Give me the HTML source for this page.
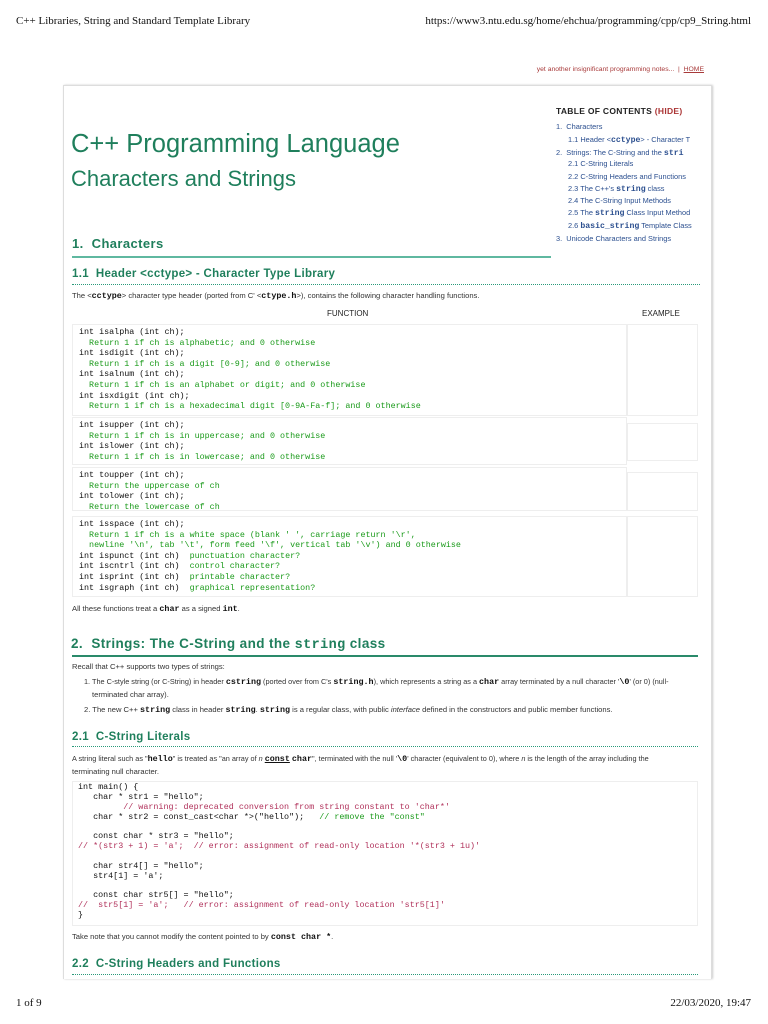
<!DOCTYPE html>
<html><head><meta charset="utf-8"><style>
*{margin:0;padding:0;box-sizing:border-box}
body{width:768px;height:1024px;background:#fff;position:relative;overflow:hidden;font-family:"Liberation Sans",sans-serif;color:#222}
.a{position:absolute;white-space:nowrap}
.ser{font-family:"Liberation Serif",serif;font-size:11px;color:#111}
.g{color:#1f7f5c}
.m{font-family:"Liberation Mono",monospace}
.code{font-family:"Liberation Mono",monospace;font-size:8.4px;color:#111;line-height:10.6px;white-space:pre}
.c{color:#1a9a1a}
.r{color:#b0305a}
.p{font-size:7.6px;color:#333}
.p b{font-family:"Liberation Mono",monospace;font-size:8.4px;color:#111}
.toc{font-size:7.4px;color:#2b4f8f}
.toc b{font-family:"Liberation Mono",monospace;font-size:8.2px}
.h2{font-weight:bold;font-size:11.5px;letter-spacing:.3px}
.dot{position:absolute;height:0;border-top:1px dotted #2a9a7a}
.cell{position:absolute;border:1px solid #eee}
</style></head><body>
<div class="a ser" style="left:16px;top:15px">C++ Libraries, String and Standard Template Library</div>
<div class="a ser" style="right:17px;top:15px">https://www3.ntu.edu.sg/home/ehchua/programming/cpp/cp9_String.html</div>
<div class="a" style="right:64px;top:66px;font-size:6.8px;color:#a83a3a">yet another insignificant programming notes... &nbsp;| &nbsp;<u>HOME</u></div>
<div style="position:absolute;left:63px;top:85px;width:649px;height:894px;border:1px solid #ddd;border-bottom:none;box-shadow:1px 0 2px #ccc"></div>

<div class="a" style="left:556px;top:106px;font-size:8.5px;font-weight:bold;color:#222;letter-spacing:.3px">TABLE OF CONTENTS <span style="color:#a33">(HIDE)</span></div>
<div class="a toc" style="left:556px;top:122px">1.&nbsp; Characters</div>
<div class="a toc" style="left:568px;top:135px">1.1 Header &lt;<b>cctype</b>&gt; - Character T</div>
<div class="a toc" style="left:556px;top:148px">2.&nbsp; Strings: The C-String and the <b>stri</b></div>
<div class="a toc" style="left:568px;top:159px">2.1 C-String Literals</div>
<div class="a toc" style="left:568px;top:172px">2.2 C-String Headers and Functions</div>
<div class="a toc" style="left:568px;top:184px">2.3 The C++'s <b>string</b> class</div>
<div class="a toc" style="left:568px;top:196px">2.4 The C-String Input Methods</div>
<div class="a toc" style="left:568px;top:208px">2.5 The <b>string</b> Class Input Method</div>
<div class="a toc" style="left:568px;top:221px">2.6 <b>basic_string</b> Template Class</div>
<div class="a toc" style="left:556px;top:234px">3.&nbsp; Unicode Characters and Strings</div>

<div class="a g" style="left:71px;top:130px;font-size:25.5px">C++ Programming Language</div>
<div class="a g" style="left:71px;top:166px;font-size:22px">Characters and Strings</div>

<div class="a g" style="left:72px;top:236px;font-size:13px;font-weight:bold;letter-spacing:.4px">1.&nbsp; Characters</div>
<div style="position:absolute;left:72px;top:256px;width:479px;height:2px;background:#5fb8a0"></div>
<div class="a g h2" style="left:72px;top:268px">1.1&nbsp; Header &lt;cctype&gt; - Character Type Library</div>
<div class="dot" style="left:72px;top:284px;width:628px"></div>
<div class="a p" style="left:72px;top:291px">The &lt;<b>cctype</b>&gt; character type header (ported from C' &lt;<b>ctype.h</b>&gt;), contains the following character handling functions.</div>
<div class="a" style="left:327px;top:309px;font-size:8px;color:#222">FUNCTION</div>
<div class="a" style="left:642px;top:309px;font-size:8px;color:#222">EXAMPLE</div>

<div class="cell" style="left:72px;top:324px;width:555px;height:92px"></div>
<div class="cell" style="left:627px;top:324px;width:71px;height:92px"></div>
<div class="cell" style="left:72px;top:417px;width:555px;height:48px"></div>
<div class="cell" style="left:627px;top:423px;width:71px;height:38px"></div>
<div class="cell" style="left:72px;top:467px;width:555px;height:44px"></div>
<div class="cell" style="left:627px;top:472px;width:71px;height:39px"></div>
<div class="cell" style="left:72px;top:516px;width:555px;height:81px"></div>
<div class="cell" style="left:627px;top:516px;width:71px;height:81px"></div>

<div class="a code" style="left:79px;top:327px">int isalpha (int ch);
<span class="c">  Return 1 if ch is alphabetic; and 0 otherwise</span>
int isdigit (int ch);
<span class="c">  Return 1 if ch is a digit [0-9]; and 0 otherwise</span>
int isalnum (int ch);
<span class="c">  Return 1 if ch is an alphabet or digit; and 0 otherwise</span>
int isxdigit (int ch);
<span class="c">  Return 1 if ch is a hexadecimal digit [0-9A-Fa-f]; and 0 otherwise</span></div>
<div class="a code" style="left:79px;top:420px">int isupper (int ch);
<span class="c">  Return 1 if ch is in uppercase; and 0 otherwise</span>
int islower (int ch);
<span class="c">  Return 1 if ch is in lowercase; and 0 otherwise</span></div>
<div class="a code" style="left:79px;top:470px">int toupper (int ch);
<span class="c">  Return the uppercase of ch</span>
int tolower (int ch);
<span class="c">  Return the lowercase of ch</span></div>
<div class="a code" style="left:79px;top:519px">int isspace (int ch);
<span class="c">  Return 1 if ch is a white space (blank ' ', carriage return '\r',
  newline '\n', tab '\t', form feed '\f', vertical tab '\v') and 0 otherwise</span>
int ispunct (int ch)  <span class="c">punctuation character?</span>
int iscntrl (int ch)  <span class="c">control character?</span>
int isprint (int ch)  <span class="c">printable character?</span>
int isgraph (int ch)  <span class="c">graphical representation?</span></div>

<div class="a p" style="left:72px;top:604px">All these functions treat a <b>char</b> as a signed <b>int</b>.</div>

<div class="a g" style="left:71px;top:636px;font-size:13.5px;font-weight:bold;letter-spacing:.4px">2.&nbsp; Strings: The C-String and the <span class="m">string</span> class</div>
<div style="position:absolute;left:72px;top:655px;width:626px;height:1.5px;background:#2a8a6a"></div>
<div class="a p" style="left:72px;top:662px">Recall that C++ supports two types of strings:</div>
<div class="a p" style="left:84px;top:677px;font-size:7.3px">1. The C-style string (or C-String) in header <b>cstring</b> (ported over from C's <b>string.h</b>), which represents a string as a <b>char</b> array terminated by a null character '<b>\0</b>' (or 0) (null-</div>
<div class="a p" style="left:92px;top:690px">terminated char array).</div>
<div class="a p" style="left:84px;top:705px">2. The new C++ <b>string</b> class in header <b>string</b>. <b>string</b> is a regular class, with public <i>interface</i> defined in the constructors and public member functions.</div>

<div class="a g h2" style="left:72px;top:731px">2.1&nbsp; C-String Literals</div>
<div class="dot" style="left:72px;top:746px;width:626px"></div>
<div class="a p" style="left:72px;top:754px;font-size:7.3px">A string literal such as "<b>hello</b>" is treated as "an array of <i>n</i> <b><u>const</u></b> <b>char</b>", terminated with the null '<b>\0</b>' character (equivalent to 0), where <i>n</i> is the length of the array including the</div>
<div class="a p" style="left:72px;top:767px">terminating null character.</div>
<div class="cell" style="left:72px;top:781px;width:626px;height:145px"></div>
<div class="a code" style="left:78px;top:783px;line-height:9.85px">int main() {
   char * str1 = "hello";
<span class="r">         // warning: deprecated conversion from string constant to 'char*'</span>
   char * str2 = const_cast&lt;char *&gt;("hello");   <span class="c">// remove the "const"</span>

   const char * str3 = "hello";
<span class="r">// *(str3 + 1) = 'a';  // error: assignment of read-only location '*(str3 + 1u)'</span>

   char str4[] = "hello";
   str4[1] = 'a';

   const char str5[] = "hello";
<span class="r">//  str5[1] = 'a';   // error: assignment of read-only location 'str5[1]'</span>
}</div>
<div class="a p" style="left:72px;top:932px">Take note that you cannot modify the content pointed to by <b>const char *</b>.</div>
<div class="a g h2" style="left:72px;top:958px">2.2&nbsp; C-String Headers and Functions</div>
<div class="dot" style="left:72px;top:974px;width:626px"></div>

<div class="a ser" style="left:16px;top:997px">1 of 9</div>
<div class="a ser" style="right:17px;top:997px">22/03/2020, 19:47</div>
</body></html>
